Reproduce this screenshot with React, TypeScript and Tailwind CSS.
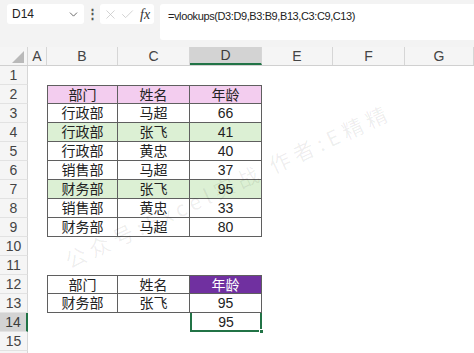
import { ChevronDown, X, Check } from 'lucide-react';

type Cell = { text?: string; bg?: string; color?: string };
type Row = { n: number; label?: boolean; cells?: [Cell, Cell, Cell]; box?: 'top' | 'mid' };

const cols = [
  { key: 'A', w: 'w-[19px]' },
  { key: 'B', w: 'w-[71px]' },
  { key: 'C', w: 'w-[72px]' },
  { key: 'D', w: 'w-[72px]' },
  { key: 'E', w: 'w-[71px]' },
  { key: 'F', w: 'w-[72px]' },
  { key: 'G', w: 'w-[69px]' },
];

const pink = 'bg-[#f3cdef]';
const green = 'bg-[#dcf0d4]';

const rows: Row[] = [
  { n: 1 },
  { n: 2, cells: [{ text: '部门', bg: pink }, { text: '姓名', bg: pink }, { text: '年龄', bg: pink }], box: 'top' },
  { n: 3, cells: [{ text: '行政部' }, { text: '马超' }, { text: '66' }], box: 'mid' },
  { n: 4, cells: [{ text: '行政部', bg: green }, { text: '张飞', bg: green }, { text: '41', bg: green }], box: 'mid' },
  { n: 5, cells: [{ text: '行政部' }, { text: '黄忠' }, { text: '40' }], box: 'mid' },
  { n: 6, cells: [{ text: '销售部' }, { text: '马超' }, { text: '37' }], box: 'mid' },
  { n: 7, cells: [{ text: '财务部', bg: green }, { text: '张飞', bg: green }, { text: '95', bg: green }], box: 'mid' },
  { n: 8, cells: [{ text: '销售部' }, { text: '黄忠' }, { text: '33' }], box: 'mid' },
  { n: 9, cells: [{ text: '财务部' }, { text: '马超' }, { text: '80' }], box: 'mid' },
  { n: 10 },
  { n: 11 },
  { n: 12, cells: [{ text: '部门' }, { text: '姓名' }, { text: '年龄', bg: 'bg-[#7030a0]', color: 'text-white' }], box: 'top' },
  { n: 13, cells: [{ text: '财务部' }, { text: '张飞' }, { text: '95' }], box: 'mid' },
  { n: 14 },
  { n: 15 },
  { n: 16, label: false },
];

function HeaderRow() {
  return (
    <div className="flex h-[19px] bg-[#f5f5f5] border-b border-[#d0d0d0]">
      <div className="relative w-[28px] shrink-0 border-r border-[#d6d6d6]">
        <svg className="absolute right-[3px] bottom-[2px]" width="12" height="12" viewBox="0 0 12 12">
          <polygon points="12,0 12,12 0,12" fill="#b9b9b9" />
        </svg>
      </div>
      {cols.map((c) => (
        <div
          key={c.key}
          className={`${c.w} shrink-0 flex items-center justify-center text-[14px] leading-none border-r border-[#d6d6d6] ${
            c.key === 'D' ? 'bg-[#d3d3d3] text-[#3b3b3b] border-b-2 border-b-[#217346]' : 'text-[#444]'
          }`}
        >
          {c.key}
        </div>
      ))}
    </div>
  );
}

function SheetRow({ row }: { row: Row }) {
  const active = row.n === 14;
  return (
    <div className="flex h-[19px]">
      <div
        className={`w-[28px] shrink-0 flex items-center justify-center text-[14px] leading-none border-b border-[#e2e2e2] ${
          active ? 'bg-[#d3d3d3] text-[#3b3b3b] border-r-2 border-r-[#217346]' : 'bg-[#f5f5f5] text-[#444] border-r border-r-[#d6d6d6]'
        }`}
      >
        {row.label === false ? '' : row.n}
      </div>
      <div className="w-[19px] shrink-0" />
      {row.cells
        ? row.cells.map((cell, i) => (
            <div
              key={i}
              className={`${i === 0 ? 'w-[71px] border-l' : 'w-[72px]'} shrink-0 flex items-center justify-center border-r border-b border-[#5f5f5f] text-[14px] leading-none ${
                row.box === 'top' ? 'border-t' : ''
              } ${cell.bg ?? 'bg-white'} ${cell.color ?? 'text-[#222]'}`}
            >
              {cell.text}
            </div>
          ))
        : active
          ? (
            <>
              <div className="w-[71px] shrink-0" />
              <div className="w-[72px] shrink-0" />
              <div className="relative w-[72px] shrink-0 flex items-center justify-center border-2 border-t-0 border-[#217346] text-[14px] leading-none text-[#222]">
                95
                <div className="absolute -right-[4px] -bottom-[4px] h-[5px] w-[5px] bg-[#217346] border border-white" />
              </div>
            </>
          )
          : null}
    </div>
  );
}

export default function App() {
  return (
    <div className="relative w-[474px] h-[353px] overflow-hidden bg-white font-['Liberation_Sans','Noto_Sans_CJK_SC',sans-serif]">
      <div className="flex h-[47px] items-start bg-[#f3f3f3] pt-[4px] pl-[7px]">
        <div className="flex h-[20px] w-[77px] items-center justify-between rounded-[3px] bg-white pl-[5px] pr-[4px] text-[12px] text-[#222]">
          <span>D14</span>
          <ChevronDown size={13} strokeWidth={1.6} className="text-[#555]" />
        </div>
        <div className="flex h-[20px] w-[16px] items-center justify-center text-[13px] font-bold text-[#555]">⋮</div>
        <div className="flex h-[20px] w-[54px] items-center gap-[2px] rounded-[3px] bg-white pl-[3px]">
          <X size={15} strokeWidth={1.2} className="text-[#c4c4c4]" />
          <Check size={15} strokeWidth={1.2} className="text-[#c4c4c4]" />
          <span className="ml-[3px] font-['Liberation_Serif',serif] text-[14px] italic text-[#333]">fx</span>
        </div>
        <div className="ml-[6px] h-[36px] flex-1 rounded-l-[3px] bg-white pl-[8px] pt-[4px] text-[11px] tracking-[-0.4px] text-[#222]">
          =vlookups(D3:D9,B3:B9,B13,C3:C9,C13)
        </div>
      </div>
      <HeaderRow />
      {rows.map((r) => (
        <SheetRow key={r.n} row={r} />
      ))}
      {/* watermark */}
      <div className="pointer-events-none absolute left-[66px] top-[250px] origin-left -rotate-[25deg] whitespace-nowrap text-[21px] leading-[22px] tracking-[5px] text-black/[0.07] font-['Noto_Sans_CJK_SC',sans-serif]">
        公众号:Excel实战 作者:E精精
      </div>
    </div>
  );
}
